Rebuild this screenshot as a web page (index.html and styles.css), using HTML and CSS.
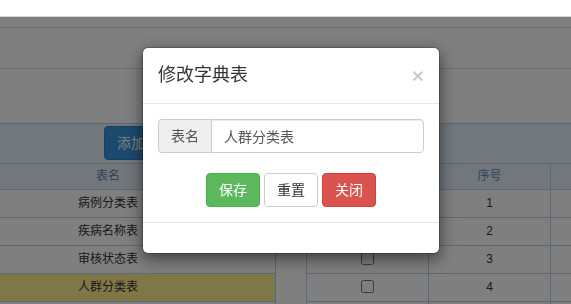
FILE: index.html
```html
<!DOCTYPE html>
<html lang="zh-CN">
<head>
<meta charset="utf-8">
<title>修改字典表</title>
<link rel="stylesheet" href="styles.css">
</head>
<body>
<div class="topbar"></div>
<div class="band band-a"></div>
<div class="band band-b"></div>
<div class="spacer"></div>
<div class="toolbar">
  <button class="btn btn-primary" type="button">添加</button>
</div>
<div class="tables">
  <div class="tbl tbl-left">
    <div class="cell head name">表名</div>
    <div class="cell name">病例分类表</div>
    <div class="cell name">疾病名称表</div>
    <div class="cell name">审核状态表</div>
    <div class="cell name selected">人群分类表</div>
    <div class="cell name"></div>
  </div>
  <div class="gap"></div>
  <div class="tbl tbl-right">
    <div class="cell head"></div>
    <div class="cell head">序号</div>
    <div class="cell head"></div>
    <div class="cell"><input type="checkbox"></div>
    <div class="cell">1</div>
    <div class="cell"></div>
    <div class="cell"><input type="checkbox"></div>
    <div class="cell">2</div>
    <div class="cell"></div>
    <div class="cell"><input type="checkbox"></div>
    <div class="cell">3</div>
    <div class="cell"></div>
    <div class="cell"><input type="checkbox"></div>
    <div class="cell">4</div>
    <div class="cell"></div>
    <div class="cell"></div>
    <div class="cell"></div>
    <div class="cell"></div>
  </div>
</div>

<div class="backdrop"></div>

<div class="modal">
  <div class="modal-header">
    <span class="close">&times;</span>
    <h4 class="modal-title">修改字典表</h4>
  </div>
  <div class="modal-body">
    <div class="input-group">
      <span class="addon">表名</span>
      <input class="form-control" type="text" value="人群分类表">
    </div>
    <div class="actions">
      <button class="btn btn-success" type="button">保存</button>
      <button class="btn btn-default" type="button">重置</button>
      <button class="btn btn-danger" type="button">关闭</button>
    </div>
  </div>
  <div class="modal-footer"></div>
</div>
</body>
</html>
```

FILE: styles.css
```css
* { box-sizing: border-box; }

html, body {
  margin: 0;
  padding: 0;
  background: #ffffff;
  overflow: hidden;
  font-family: "Liberation Sans", "Noto Sans CJK SC", sans-serif;
  color: #333333;
  font-size: 14px;
}

.topbar {
  height: 17px;
  border-bottom: 1px solid #d9d9d9;
}

.band { border-bottom: 1px solid #dedede; }
.band-a { height: 11px; }
.band-b { height: 41px; }

.spacer { height: 54px; }

.toolbar {
  background: #e4eef8;
  border-top: 1px solid #b5d2ea;
  padding: 2px 0 2px 104px;
  height: 40px;
}

.btn {
  display: inline-block;
  height: 34px;
  padding: 6px 12px;
  font-family: inherit;
  font-size: 14px;
  line-height: 20px;
  border: 1px solid transparent;
  border-radius: 4px;
  vertical-align: middle;
  cursor: pointer;
}

.btn-primary { background: #3893dc; border-color: #3182c6; color: #fff; }
.btn-success { background: #5cb85c; border-color: #4cae4c; color: #fff; }
.btn-default { background: #fff; border-color: #ccc; color: #333; }
.btn-danger  { background: #d9534f; border-color: #d43f3a; color: #fff; }

.tables {
  display: flex;
  border-top: 1px solid #b5d2ea;
}

.gap { width: 30px; }

.tbl {
  display: grid;
  font-size: 12px;
}

.tbl-left {
  width: 276px;
  grid-template-columns: 1fr;
  border-right: 1px solid #b5d2ea;
}

.tbl-right {
  flex: 1;
  grid-template-columns: 122px 122px 1fr;
  border-left: 1px solid #b5d2ea;
}

.cell {
  height: 28px;
  line-height: 27px;
  border-bottom: 1px solid #b5d2ea;
  text-align: center;
  color: #333;
}

.tbl-right .cell:nth-child(3n+1),
.tbl-right .cell:nth-child(3n+2) {
  border-right: 1px solid #b5d2ea;
}

.cell.head {
  height: 26px;
  line-height: 25px;
  background: #e4eef8;
  color: #5b87ad;
}

.cell.name { padding-right: 59px; }

.cell.selected { background: #fff08c; }

.cell input[type="checkbox"] {
  margin: 0;
  width: 13px;
  height: 13px;
  vertical-align: middle;
  position: relative;
  top: -1px;
}

.backdrop {
  position: fixed;
  top: 17px;
  left: 0;
  right: 0;
  bottom: 0;
  background: rgba(0, 0, 0, 0.5);
}

.modal {
  position: absolute;
  left: 142px;
  top: 47px;
  width: 298px;
  background: #fff;
  border: 1px solid rgba(0, 0, 0, 0.2);
  border-radius: 6px;
  box-shadow: 0 5px 15px rgba(0, 0, 0, 0.5);
  background-clip: padding-box;
}

.modal-header {
  padding: 15px;
  border-bottom: 1px solid #e5e5e5;
}

.modal-title {
  margin: 0;
  font-size: 18px;
  font-weight: normal;
  line-height: 25px;
  color: #333;
}

.close {
  float: right;
  font-size: 21px;
  font-weight: bold;
  line-height: 1;
  color: #000;
  opacity: 0.2;
  margin-top: 2px;
  margin-right: 0;
}

.modal-body { padding: 15px; }

.input-group {
  display: flex;
  height: 34px;
}

.addon {
  padding: 6px 12px;
  font-size: 14px;
  line-height: 20px;
  background: #eee;
  border: 1px solid #ccc;
  border-right: 0;
  border-radius: 4px 0 0 4px;
  color: #555;
}

.form-control {
  flex: 1;
  min-width: 0;
  height: 34px;
  padding: 6px 12px;
  font-family: inherit;
  font-size: 14px;
  line-height: 20px;
  color: #555;
  border: 1px solid #ccc;
  border-radius: 0 4px 4px 0;
  box-shadow: inset 0 1px 1px rgba(0, 0, 0, 0.075);
  outline: none;
}

.actions {
  margin-top: 20px;
  display: flex;
  justify-content: center;
  gap: 4px;
}

.modal-footer {
  height: 31px;
  border-top: 1px solid #e5e5e5;
}
```
